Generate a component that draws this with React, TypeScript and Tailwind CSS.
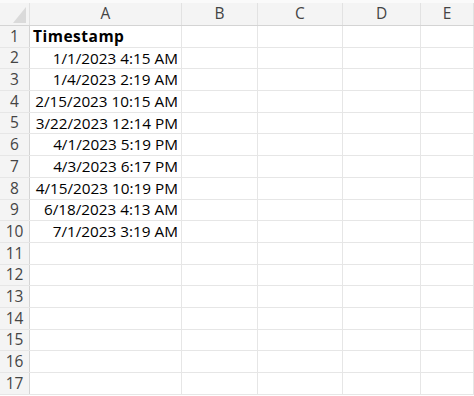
import React from "react";

const cols = [
  { name: "A", w: "w-[152px]" },
  { name: "B", w: "w-[76px]" },
  { name: "C", w: "w-[85px]" },
  { name: "D", w: "w-[78px]" },
  { name: "E", w: "flex-1" },
];

const values = [
  "1/1/2023 4:15 AM",
  "1/4/2023 2:19 AM",
  "2/15/2023 10:15 AM",
  "3/22/2023 12:14 PM",
  "4/1/2023 5:19 PM",
  "4/3/2023 6:17 PM",
  "4/15/2023 10:19 PM",
  "6/18/2023 4:13 AM",
  "7/1/2023 3:19 AM",
];

const rows = Array.from({ length: 17 }, (_, i) => i + 1);

export default function App() {
  return (
    <div className="w-[474px] h-[396px] overflow-hidden bg-white text-[15.3px] text-black flex flex-col" style={{ fontFamily: '"Open Sans", "Noto Sans", sans-serif' }}>
      <div className="flex h-[26px] shrink-0 bg-[#f4f4f4] border-b border-[#d4d4d4] border-t-[3px] border-t-[#fafafa]">
        <div className="w-[30px] shrink-0 relative border-r border-[#e2e2e2]">
          <svg className="absolute right-[3px] bottom-[2px]" width="13" height="16" viewBox="0 0 13 16">
            <polygon points="13,0 13,16 0,16" fill="#dadada" />
          </svg>
        </div>
        {cols.map((c) => (
          <div key={c.name} className={`${c.w} shrink-0 flex items-center justify-center text-[15.5px] text-[#444] border-r border-[#e2e2e2]`}>
            {c.name}
          </div>
        ))}
      </div>
      {rows.map((r) => (
        <div key={r} className="flex h-[21.7px] shrink-0 border-b border-[#e6e6e6]">
          <div className="w-[30px] shrink-0 bg-[#f4f4f4] border-r border-[#d4d4d4] flex items-center justify-center text-[15.5px] text-[#444]">
            {r}
          </div>
          {cols.map((c) => (
            <div key={c.name} className={`${c.w} shrink-0 flex items-center border-r border-[#e6e6e6] px-[3px] ${c.name === "A" && r > 1 ? "justify-end" : ""}`}>
              {c.name === "A" && r === 1 && <span className="font-bold text-[15.5px] tracking-[0.5px]">Timestamp</span>}
              {c.name === "A" && r > 1 && values[r - 2] ? values[r - 2] : null}
            </div>
          ))}
        </div>
      ))}
    </div>
  );
}
